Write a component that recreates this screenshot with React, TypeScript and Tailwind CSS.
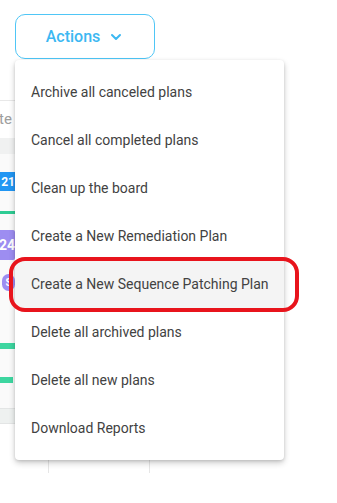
import { ChevronDown } from "lucide-react";

const actions = [
	"Archive all canceled plans",
	"Cancel all completed plans",
	"Clean up the board",
	"Create a New Remediation Plan",
	"Create a New Sequence Patching Plan",
	"Delete all archived plans",
	"Delete all new plans",
	"Download Reports",
];

// Board that sits behind the open dropdown (only its left edge shows)
function Board() {
	return (
		<div className="flex">
			<div className="flex w-[48px] flex-col bg-[#fafafa]">
				{/* filter input */}
				<div className="flex h-[38px] items-center border-t border-[#e8e8e8] bg-white text-[15px] text-[#9e9e9e]">
					<span className="ml-[-1px]">te</span>
				</div>
				{/* column header band */}
				<div className="h-[16px] bg-[#f0f1f1]" />
				<div className="h-[18px]" />
				<div className="flex h-[19px] w-[15px] items-center justify-end overflow-hidden bg-[#2196f3] text-[12px] font-bold text-white">
					21
				</div>
				<div className="h-[20px]" />
				<div className="h-[3px] w-[15px] bg-[#2ecc94]" />
				<div className="h-[16px]" />
				<div className="flex h-[30px] w-[15px] items-center justify-end overflow-hidden rounded-r-[2px] bg-[#9d8df1] text-[14px] font-bold text-white">
					024
				</div>
				<div className="h-[14px]" />
				<div className="ml-[2px] flex h-[17px] w-[13px] items-center justify-center rounded-full bg-[#9d8df1] text-[10px] font-bold text-white">
					S
				</div>
				<div className="h-[52px]" />
				<div className="h-[6px] w-[15px] bg-[#3dd6a0]" />
				<div className="h-[28px]" />
				<div className="h-[6px] w-[13px] bg-[#3dd6a0]" />
				<div className="h-[25px]" />
				<div className="h-[16px] border-y border-[#e3e5e5] bg-[#eef1f0]" />
				<div className="h-[51px] bg-white" />
			</div>
			<div className="h-[373px] w-[102px] border-x border-[#e6e6e6] bg-white" />
			<div className="h-[373px] flex-1 bg-white" />
		</div>
	);
}

export default function App() {
	return (
		<div
			className="relative h-[503px] w-[337px] overflow-hidden bg-white"
			style={{ fontFamily: "Roboto, 'Liberation Sans', sans-serif" }}
		>
			<div className="px-[15px] pt-[14px]">
				<button className="flex h-[45px] w-[140px] items-center justify-center gap-[8px] rounded-[10px] border border-[#4fc6f6] text-[16px] font-medium text-[#3cb8f2]">
					<span>Actions</span>
					<ChevronDown className="h-[16px] w-[16px]" strokeWidth={3} />
				</button>
			</div>
			<div className="mt-[41px]">
				<Board />
			</div>

			{/* dropdown menu */}
			<div className="absolute left-[15px] top-[60px] w-[269px] rounded-[4px] bg-white py-[8px] shadow-[0_3px_6px_rgba(0,0,0,0.2),0_1px_3px_rgba(0,0,0,0.12)]">
				<ul className="flex flex-col">
					{actions.map((label, i) => (
						<li
							key={label}
							className={`flex h-[48px] items-center whitespace-nowrap px-[16px] text-[14px] text-[#424242] ${i === 4 ? "bg-[#f4f4f4]" : ""}`}
						>
							{label}
						</li>
					))}
				</ul>
			</div>

			{/* hand-drawn highlight */}
			<div className="pointer-events-none absolute left-[9px] top-[257px] h-[55px] w-[290px] rounded-[16px] border-[4px] border-[#e8141c]" />
		</div>
	);
}
